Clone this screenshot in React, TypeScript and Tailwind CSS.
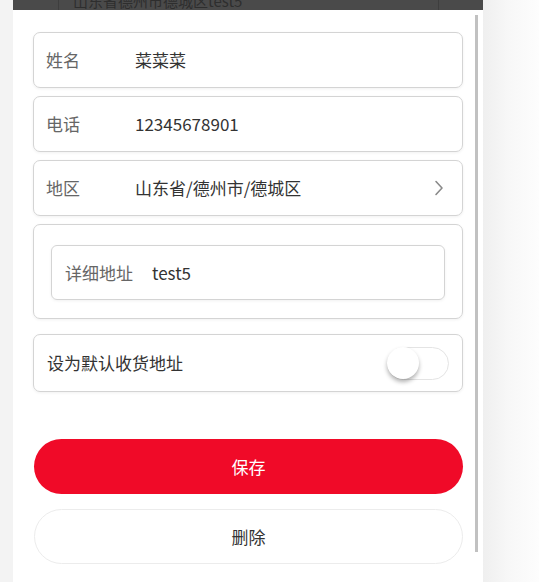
const font = { fontFamily: '"Noto Sans CJK SC", "Noto Sans", sans-serif' };

function Row({ label, value, arrow }: { label: string; value: string; arrow?: boolean }) {
  return (
    <div className="flex items-center h-[56px] pl-[12px] pr-[18px] border border-[#d4d4d4] rounded-[7px] shadow-[0_1px_3px_rgba(0,0,0,0.06)]">
      <span className="w-[89px] shrink-0 text-[#666] text-[17px]">{label}</span>
      <span className="flex-1 text-[#333] text-[17px]">{value}</span>
      {arrow && (
        <svg width="10" height="16" viewBox="0 0 10 16" fill="none">
          <path d="M2 1.5 L8 8 L2 14.5" stroke="#8a8a8a" strokeWidth="1.6" strokeLinecap="round" strokeLinejoin="round" />
        </svg>
      )}
    </div>
  );
}

export default function App() {
  return (
    <div className="flex w-[539px] h-[582px] overflow-hidden bg-white" style={font}>
      <div className="w-[13px] shrink-0 bg-[#f3f3f3]" />
      <div className="relative w-[470px] shrink-0 flex flex-col bg-white">
        <div className="relative h-[10px] shrink-0 overflow-hidden bg-[#4a4a4a]">
          <div className="absolute left-[45px] top-0 h-full w-px bg-[#3e3e3e]" />
          <div className="absolute left-[425px] top-0 h-full w-px bg-[#3e3e3e]" />
          <span className="absolute left-[60px] top-[-7px] text-[15px] leading-[15px] text-[#2e2e2e] whitespace-nowrap">
            山东省德州市德城区test5
          </span>
        </div>
        <div className="absolute right-[5px] top-[15px] w-[3px] h-[537px] bg-[#c1c1c1]" />
        <div className="flex flex-col pt-[22px] pl-[20px] pr-[20px]">
          <div className="flex flex-col gap-[8px]">
            <Row label="姓名" value="菜菜菜" />
            <Row label="电话" value="12345678901" />
            <Row label="地区" value="山东省/德州市/德城区" arrow />
            <div className="h-[95px] px-[17px] py-[20px] border border-[#d4d4d4] rounded-[7px] shadow-[0_1px_3px_rgba(0,0,0,0.06)]">
              <div className="flex items-center h-[55px] pl-[13px] border border-[#d4d4d4] rounded-[6px] shadow-[0_1px_3px_rgba(0,0,0,0.06)]">
                <span className="w-[87px] shrink-0 text-[#666] text-[17px]">详细地址</span>
                <span className="text-[#333] text-[17px]">test5</span>
              </div>
            </div>
          </div>
          <div className="mt-[15px] flex items-center justify-between h-[58px] pl-[13px] pr-[13px] border border-[#d4d4d4] rounded-[7px] shadow-[0_1px_3px_rgba(0,0,0,0.06)]">
            <span className="text-[#333] text-[17px]">设为默认收货地址</span>
            <div className="relative w-[62px] h-[33px] rounded-full border border-[#e4e4e4] bg-white">
              <div className="absolute left-[-1px] top-[-1px] w-[32px] h-[32px] rounded-full bg-white shadow-[0_3px_4px_rgba(0,0,0,0.3)]" />
            </div>
          </div>
          <button className="mt-[47px] ml-px h-[55px] rounded-full bg-[#f00a28] text-white text-[17px]">保存</button>
          <button className="mt-[15px] ml-px h-[55px] rounded-full border border-[#ececec] bg-white text-[#333] text-[17px]">删除</button>
        </div>
      </div>
      <div className="flex-1 bg-gradient-to-r from-[#efefef] via-[#f8f8f8] to-[#fdfdfd]" />
    </div>
  );
}
